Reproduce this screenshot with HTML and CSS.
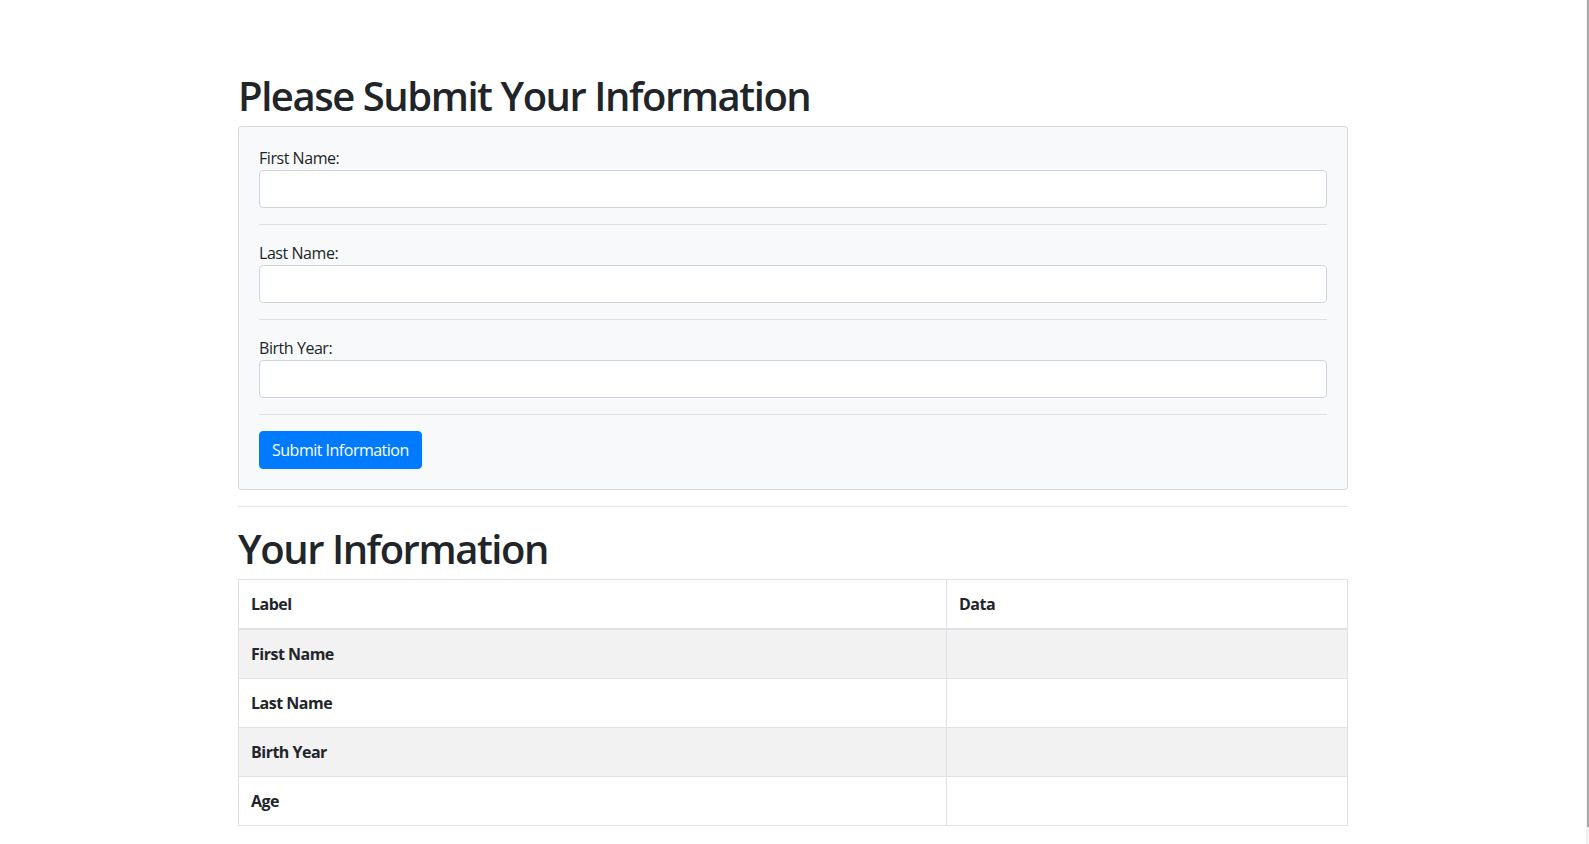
FILE: index.html
```html
<!DOCTYPE html>
<html lang="en">
<head>
<meta charset="utf-8">
<title>Please Submit Your Information</title>
<link rel="stylesheet" href="styles.css">
</head>
<body>
<div class="viewport">
  <main class="container">
    <h1 class="title">Please Submit Your Information</h1>
    <form class="card">
      <div class="form-group">
        <label class="label" for="first">First Name:</label>
        <input class="input" id="first" type="text">
      </div>
      <hr class="rule">
      <div class="form-group">
        <label class="label" for="last">Last Name:</label>
        <input class="input" id="last" type="text">
      </div>
      <hr class="rule">
      <div class="form-group">
        <label class="label" for="year">Birth Year:</label>
        <input class="input" id="year" type="text">
      </div>
      <hr class="rule">
      <button class="btn" type="button">Submit Information</button>
    </form>
    <hr class="rule">
    <h1 class="title">Your Information</h1>
    <table class="table">
      <colgroup><col class="col-label"><col class="col-data"></colgroup>
      <thead>
        <tr><th>Label</th><th>Data</th></tr>
      </thead>
      <tbody>
        <tr class="odd"><th>First Name</th><td></td></tr>
        <tr><th>Last Name</th><td></td></tr>
        <tr class="odd"><th>Birth Year</th><td></td></tr>
        <tr><th>Age</th><td></td></tr>
      </tbody>
    </table>
  </main>
</div>
<div class="scrollbar"><div class="thumb"></div></div>
</body>
</html>
```
FILE: styles.css
```css
* { box-sizing: border-box; }
html, body { height: 100%; }
body {
  margin: 0;
  display: flex;
  overflow: hidden;
  font-family: "Open Sans", "Noto Sans", sans-serif;
  font-size: 16px;
  line-height: 1.5;
  letter-spacing: -0.45px;
  color: #212529;
  background: #fff;
}
.viewport {
  flex: 1;
  min-width: 0;
  height: 100%;
  overflow: hidden;
}
.container {
  width: 1140px;
  margin: 0 auto;
  padding: 70px 15px 0;
}
.title {
  margin: 0 0 6px;
  padding-top: 2px;
  font-size: 40px;
  font-weight: 600;
  line-height: 1.2;
  letter-spacing: -1.45px;
}
.card {
  display: flex;
  flex-direction: column;
  background: #f8f9fa;
  border: 1px solid rgba(0,0,0,.125);
  border-radius: 4px;
  padding: 19px 20px 20px;
}
.form-group { display: flex; flex-direction: column; }
.label { margin: 0; line-height: 24px; }
.input {
  height: 38px;
  padding: 6px 12px;
  font: inherit;
  color: #495057;
  background: #fff;
  border: 1px solid #ced4da;
  border-radius: 4px;
}
.rule {
  margin: 16px 0;
  border: 0;
  border-top: 1px solid rgba(0,0,0,.1);
}
.btn {
  align-self: flex-start;
  height: 38px;
  padding: 6px 12px;
  font: inherit;
  line-height: 24px;
  letter-spacing: -0.5px;
  color: #fff;
  background: #007bff;
  border: 1px solid #007bff;
  border-radius: 4px;
}
.table {
  width: 100%;
  border-collapse: collapse;
  table-layout: fixed;
  color: #212529;
}
.col-label { width: 708px; }
.table th, .table td {
  padding: 12px;
  height: 49px;
  border: 1px solid #dee2e6;
  text-align: left;
  vertical-align: top;
  font-weight: 700;
  line-height: 24px;
  letter-spacing: -0.5px;
}
.table thead th { border-bottom-width: 2px; }
.table .odd { background: #f2f2f2; }
.scrollbar {
  width: 3px;
  flex: none;
  height: 100%;
  background: #f1f1f1;
  display: flex;
  padding-bottom: 17px;
}
.thumb {
  margin-left: 1px;
  width: 2px;
  height: 100%;
  background: #a8a8a8;
}
```
